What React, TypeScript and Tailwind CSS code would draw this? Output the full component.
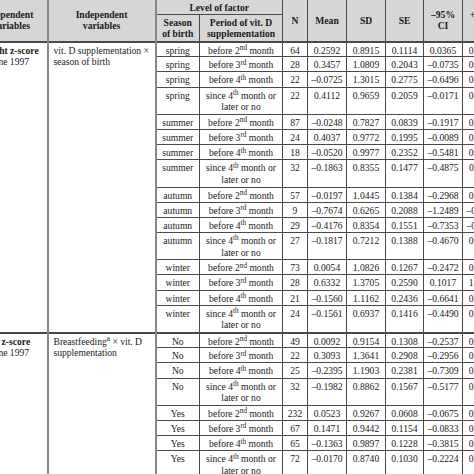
type Row = {
  season: string;
  period: "2" | "3" | "4" | "s";
  n: string;
  mean: string;
  sd: string;
  se: string;
  lo: string;
  hi: string;
};

const group1: Row[] = [
  { season: "spring", period: "2", n: "64", mean: "0.2592", sd: "0.8915", se: "0.1114", lo: "0.0365", hi: "0.4819" },
  { season: "spring", period: "3", n: "28", mean: "0.3457", sd: "1.0809", se: "0.2043", lo: "–0.0735", hi: "0.7649" },
  { season: "spring", period: "4", n: "22", mean: "–0.0725", sd: "1.3015", se: "0.2775", lo: "–0.6496", hi: "0.5046" },
  { season: "spring", period: "s", n: "22", mean: "0.4112", sd: "0.9659", se: "0.2059", lo: "–0.0171", hi: "0.8395" },
  { season: "summer", period: "2", n: "87", mean: "–0.0248", sd: "0.7827", se: "0.0839", lo: "–0.1917", hi: "0.1421" },
  { season: "summer", period: "3", n: "24", mean: "0.4037", sd: "0.9772", se: "0.1995", lo: "–0.0089", hi: "0.8163" },
  { season: "summer", period: "4", n: "18", mean: "–0.0520", sd: "0.9977", se: "0.2352", lo: "–0.5481", hi: "0.4441" },
  { season: "summer", period: "s", n: "32", mean: "–0.1863", sd: "0.8355", se: "0.1477", lo: "–0.4875", hi: "0.1149" },
  { season: "autumn", period: "2", n: "57", mean: "–0.0197", sd: "1.0445", se: "0.1384", lo: "–0.2968", hi: "0.2574" },
  { season: "autumn", period: "3", n: "9", mean: "–0.7674", sd: "0.6265", se: "0.2088", lo: "–1.2489", hi: "–0.2859" },
  { season: "autumn", period: "4", n: "29", mean: "–0.4176", sd: "0.8354", se: "0.1551", lo: "–0.7353", hi: "–0.0999" },
  { season: "autumn", period: "s", n: "27", mean: "–0.1817", sd: "0.7212", se: "0.1388", lo: "–0.4670", hi: "0.1036" },
  { season: "winter", period: "2", n: "73", mean: "0.0054", sd: "1.0826", se: "0.1267", lo: "–0.2472", hi: "0.2580" },
  { season: "winter", period: "3", n: "28", mean: "0.6332", sd: "1.3705", se: "0.2590", lo: "0.1017", hi: "1.1647" },
  { season: "winter", period: "4", n: "21", mean: "–0.1560", sd: "1.1162", se: "0.2436", lo: "–0.6641", hi: "0.3521" },
  { season: "winter", period: "s", n: "24", mean: "–0.1561", sd: "0.6937", se: "0.1416", lo: "–0.4490", hi: "0.1368" },
];

const group2: Row[] = [
  { season: "No", period: "2", n: "49", mean: "0.0092", sd: "0.9154", se: "0.1308", lo: "–0.2537", hi: "0.2721" },
  { season: "No", period: "3", n: "22", mean: "0.3093", sd: "1.3641", se: "0.2908", lo: "–0.2956", hi: "0.9142" },
  { season: "No", period: "4", n: "25", mean: "–0.2395", sd: "1.1903", se: "0.2381", lo: "–0.7309", hi: "0.2519" },
  { season: "No", period: "s", n: "32", mean: "–0.1982", sd: "0.8862", se: "0.1567", lo: "–0.5177", hi: "0.1213" },
  { season: "Yes", period: "2", n: "232", mean: "0.0523", sd: "0.9267", se: "0.0608", lo: "–0.0675", hi: "0.1721" },
  { season: "Yes", period: "3", n: "67", mean: "0.1471", sd: "0.9442", se: "0.1154", lo: "–0.0833", hi: "0.3775" },
  { season: "Yes", period: "4", n: "65", mean: "–0.1363", sd: "0.9897", se: "0.1228", lo: "–0.3815", hi: "0.1089" },
  { season: "Yes", period: "s", n: "72", mean: "–0.0170", sd: "0.8740", se: "0.1030", lo: "–0.2224", hi: "0.1884" },
];

function Period({ p }: { p: Row["period"] }) {
  if (p === "s")
    return (
      <>
        since 4<sup>th</sup> month or
        <br />
        later or no
      </>
    );
  const suf = p === "2" ? "nd" : p === "3" ? "rd" : "th";
  return (
    <>
      before {p}
      <sup>{suf}</sup> month
    </>
  );
}

const cell = "border border-[#4a4a4a] px-[2px] pt-[2px] align-top text-center";
const head = "border border-[#4a4a4a] bg-[#d6d6d6] font-bold text-center align-middle leading-[11px]";

function Rows({ rows, dep, dep2, indep }: { rows: Row[]; dep: string; dep2: string; indep: React.ReactNode }) {
  return (
    <>
      {rows.map((r, i) => (
        <tr key={i} className={r.period === "s" ? "h-[27.2px]" : "h-[15.2px]"}>
          {i === 0 && (
            <>
              <td rowSpan={rows.length} className="border border-[#4a4a4a] border-t-2 border-r-2 border-r-[#888] pl-[4px] pt-[2px] align-top text-left">
                <span className="font-bold">{dep}</span>
                <br />
                {dep2}
              </td>
              <td rowSpan={rows.length} className="border border-[#4a4a4a] border-t-2 border-r-2 border-r-[#888] pl-[5px] pt-[2px] align-top text-left">
                {indep}
              </td>
            </>
          )}
          <td className={`${cell} ${i === 0 ? "border-t-2" : ""}`}>{r.season}</td>
          <td className={`${cell} ${i === 0 ? "border-t-2" : ""}`}>
            <Period p={r.period} />
          </td>
          <td className={`${cell} ${i === 0 ? "border-t-2" : ""}`}>{r.n}</td>
          <td className={`${cell} ${i === 0 ? "border-t-2" : ""}`}>{r.mean}</td>
          <td className={`${cell} ${i === 0 ? "border-t-2" : ""}`}>{r.sd}</td>
          <td className={`${cell} ${i === 0 ? "border-t-2" : ""}`}>{r.se}</td>
          <td className={`${cell} ${i === 0 ? "border-t-2" : ""}`}>{r.lo}</td>
          <td className={`${cell} ${i === 0 ? "border-t-2" : ""}`}>{r.hi}</td>
        </tr>
      ))}
    </>
  );
}

export default function App() {
  return (
    <div className="w-[474px] h-[474px] overflow-hidden bg-white">
      <table
        className="ml-[-25px] mt-[-1px] table-fixed border-collapse text-[9.6px] leading-[11.5px] text-[#1a1a1a] w-[526px]"
        style={{ fontFamily: '"Liberation Serif", "Times New Roman", serif' }}
      >
        <colgroup>
          <col className="w-[72px]" />
          <col className="w-[108px]" />
          <col className="w-[44px]" />
          <col className="w-[83px]" />
          <col className="w-[25px]" />
          <col className="w-[39px]" />
          <col className="w-[39px]" />
          <col className="w-[38px]" />
          <col className="w-[39px]" />
          <col className="w-[39px]" />
        </colgroup>
        <thead>
          <tr className="h-[15px]">
            <th rowSpan={2} className={`${head} border-r-2 border-r-[#888]`}>
              Dependent
              <br />
              variables
            </th>
            <th rowSpan={2} className={`${head} border-r-2 border-r-[#888]`}>
              Independent
              <br />
              variables
            </th>
            <th colSpan={2} className={head}>
              Level of factor
            </th>
            <th rowSpan={2} className={head}>N</th>
            <th rowSpan={2} className={head}>Mean</th>
            <th rowSpan={2} className={head}>SD</th>
            <th rowSpan={2} className={head}>SE</th>
            <th rowSpan={2} className={head}>
              –95%
              <br />
              CI
            </th>
            <th rowSpan={2} className={head}>
              +95%
              <br />
              CI
            </th>
          </tr>
          <tr className="h-[27px]">
            <th className={head}>
              Season
              <br />
              of birth
            </th>
            <th className={head}>
              Period of vit. D
              <br />
              supplementation
            </th>
          </tr>
        </thead>
        <tbody>
          <Rows rows={group1} dep="Height z-score" dep2="in June 1997" indep={<>vit. D supplementation × season of birth</>} />
          <Rows
            rows={group2}
            dep="BMI z-score"
            dep2="in June 1997"
            indep={
              <>
                Breastfeeding<sup>a</sup> × vit. D supplementation
              </>
            }
          />
        </tbody>
      </table>
    </div>
  );
}
